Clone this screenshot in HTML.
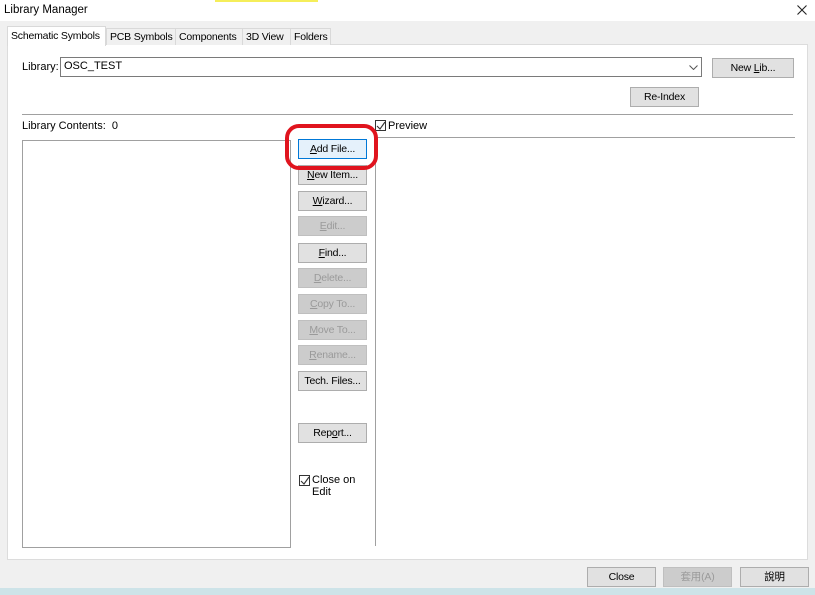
<!DOCTYPE html>
<html><head><meta charset="utf-8"><style>
*{margin:0;padding:0;box-sizing:border-box}
body{width:815px;height:595px;position:relative;overflow:hidden;background:#f0f0f0;font-family:"Liberation Sans","Noto Sans CJK TC",sans-serif;font-size:11px;color:#000;white-space:nowrap}
.a{position:absolute}
.btn{position:absolute;background:#e1e1e1;border:1px solid #adadad;text-align:center;font-size:10.5px;line-height:18px;height:20px;letter-spacing:-0.2px}
.dis{background:#cccccc;border-color:#bfbfbf;color:#9a9a9a}
.tab{position:absolute;top:28px;height:17px;border:1px solid #d9d9d9;border-bottom:none;background:#f0f0f0;line-height:17px;padding:0 3px;font-size:10.5px;letter-spacing:-0.2px;white-space:nowrap;overflow:hidden}
.cb{position:absolute;width:11px;height:11px;border:1px solid #333;background:#fff}
</style></head><body>
<div class="a" style="left:0;top:0;width:815px;height:21px;background:#fff"></div>
<div class="a" style="left:215px;top:0;width:103px;height:2px;background:#f5ee5a"></div>
<div class="a" style="left:4px;top:4px;font-size:11.5px">Library Manager</div>
<svg class="a" style="left:797px;top:5px" width="10" height="10"><path d="M0.5 0.5L9.5 9.5M9.5 0.5L0.5 9.5" stroke="#222" stroke-width="1.1"/></svg>
<div class="a" style="left:7px;top:44px;width:801px;height:516px;background:#fff;border:1px solid #dcdcdc"></div>
<div class="tab" style="left:106px;width:70px">PCB Symbols</div>
<div class="tab" style="left:175px;width:68px">Components</div>
<div class="tab" style="left:242px;width:49px">3D View</div>
<div class="tab" style="left:290px;width:41px">Folders</div>
<div class="tab" style="left:7px;top:26px;height:20px;width:99px;background:#fff;padding-top:1px">Schematic Symbols</div>
<div class="a" style="left:22px;top:61px">Library:</div>
<div class="a" style="left:60px;top:57px;width:642px;height:20px;border:1px solid #7a7a7a;background:#fff;padding:2px 3px">OSC_TEST</div>
<svg class="a" style="left:689px;top:65px" width="9" height="5"><path d="M0.5 0.5L4.5 4.5L8.5 0.5" fill="none" stroke="#555"/></svg>
<div class="btn" style="left:712px;top:58px;width:82px">New <u>L</u>ib...</div>
<div class="btn" style="left:630px;top:87px;width:69px">Re-Index</div>
<div class="a" style="left:22px;top:114px;width:771px;height:1px;background:#a0a0a0"></div>
<div class="a" style="left:22px;top:120px">Library Contents:&nbsp;&nbsp;0</div>
<div class="cb" style="left:375px;top:120px"></div>
<svg class="a" style="left:376px;top:121px" width="10" height="10"><path d="M1 5L4 8L9 1" fill="none" stroke="#333" stroke-width="1.1"/></svg>
<div class="a" style="left:388px;top:120px">Preview</div>
<div class="a" style="left:375px;top:137px;width:420px;height:1px;background:#a0a0a0"></div>
<div class="a" style="left:22px;top:140px;width:269px;height:408px;border:1px solid #a0a0a0;background:#fff"></div>
<div class="a" style="left:375px;top:138px;width:1px;height:408px;background:#a0a0a0"></div>
<div class="btn" style="left:298px;top:139px;width:69px;background:#e5f1fb;border:1px solid #0078d7"><u>A</u>dd File...</div>
<div class="btn" style="left:298px;top:165px;width:69px"><u>N</u>ew Item...</div>
<div class="btn" style="left:298px;top:191px;width:69px"><u>W</u>izard...</div>
<div class="btn dis" style="left:298px;top:216px;width:69px"><u>E</u>dit...</div>
<div class="btn" style="left:298px;top:243px;width:69px"><u>F</u>ind...</div>
<div class="btn dis" style="left:298px;top:268px;width:69px"><u>D</u>elete...</div>
<div class="btn dis" style="left:298px;top:294px;width:69px"><u>C</u>opy To...</div>
<div class="btn dis" style="left:298px;top:320px;width:69px"><u>M</u>ove To...</div>
<div class="btn dis" style="left:298px;top:345px;width:69px"><u>R</u>ename...</div>
<div class="btn" style="left:298px;top:371px;width:69px">Tech. Files...</div>
<div class="btn" style="left:298px;top:423px;width:69px">Rep<u>o</u>rt...</div>
<div class="cb" style="left:299px;top:475px"></div>
<svg class="a" style="left:300px;top:476px" width="10" height="10"><path d="M1 5L4 8L9 1" fill="none" stroke="#333" stroke-width="1.1"/></svg>
<div class="a" style="left:312px;top:474px;line-height:12px">Close on<br>Edit</div>
<div class="a" style="left:285px;top:124px;width:93px;height:46px;border:4px solid #e0141e;border-radius:14px"></div>
<div class="btn" style="left:587px;top:567px;width:69px">Close</div>
<div class="btn dis" style="left:663px;top:567px;width:69px">套用(A)</div>
<div class="btn" style="left:740px;top:567px;width:69px">說明</div>
<div class="a" style="left:0;top:588px;width:815px;height:7px;background:#cde3e8"></div>
</body></html>
